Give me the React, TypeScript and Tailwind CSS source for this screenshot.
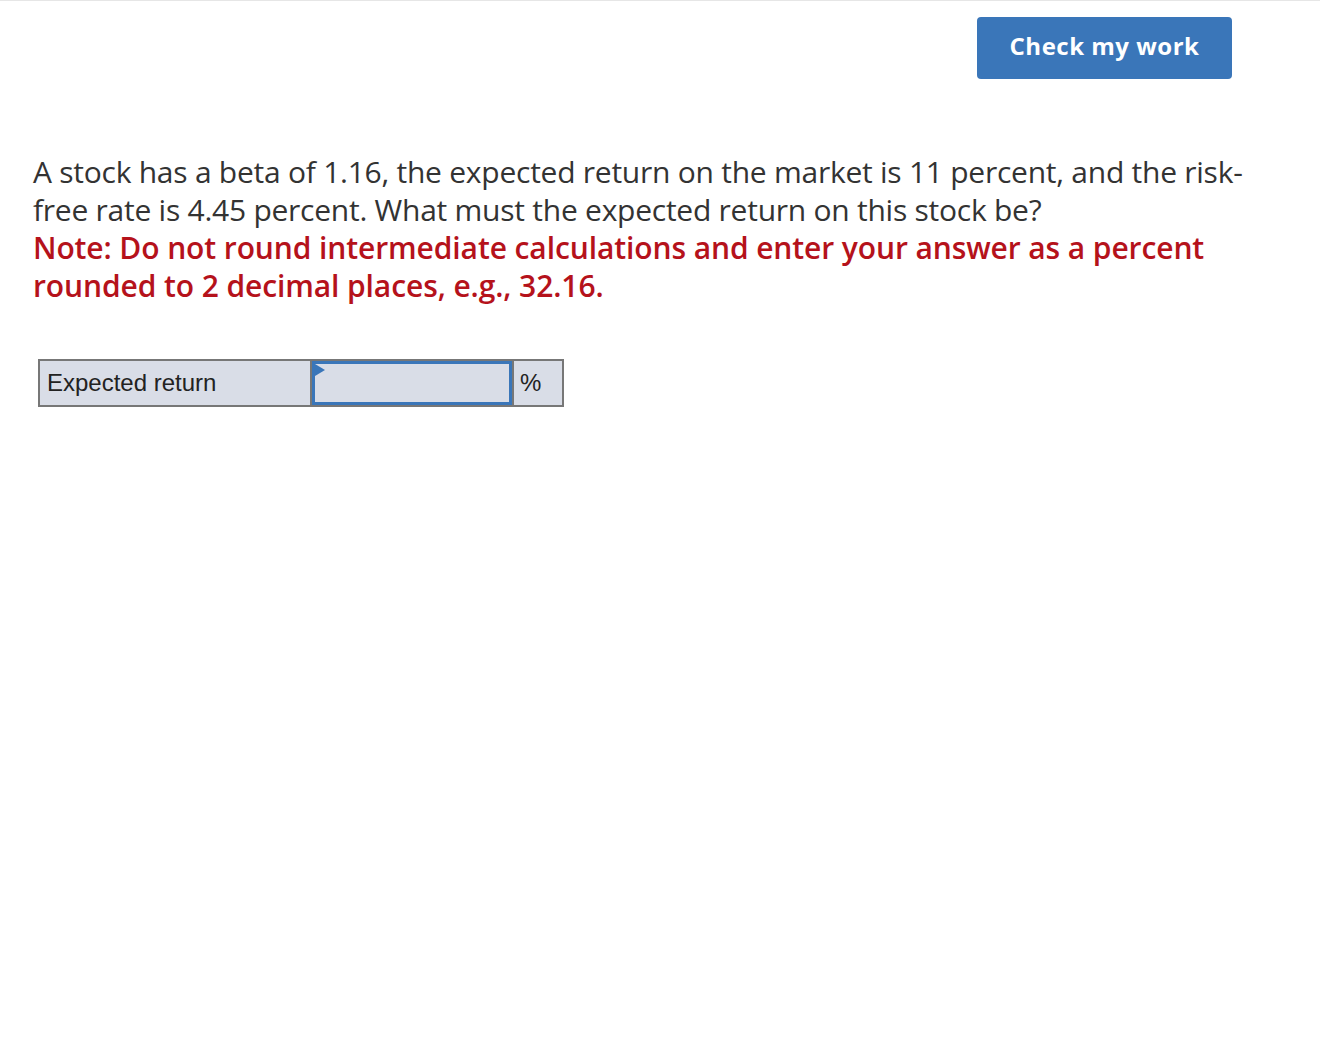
import React from 'react'

export default function App() {
  return (
    <div className="min-h-[1038px] w-[1320px] border-t border-[#e6e6e6] bg-white" style={{ fontFamily: '"Open Sans", Lato, sans-serif' }}>
      <div className="flex justify-end pr-[88px] pt-4">
        <button className="h-[62px] w-[255px] rounded-[4px] bg-[#3a76b9] pb-[5px] text-[24px] font-bold tracking-[0.5px] text-white">
          Check my work
        </button>
      </div>

      <div className="mt-[74px] pl-[33px] leading-[38px]">
        <p className="whitespace-nowrap text-[30px] tracking-[-0.25px] text-[#333]">
          A stock has a beta of 1.16, the expected return on the market is 11 percent, and the risk-
          <br />
          free rate is 4.45 percent. What must the expected return on this stock be?
        </p>
        <p className="whitespace-nowrap text-[30px] font-semibold tracking-[-0.1px] text-[#b5121b]">
          Note: Do not round intermediate calculations and enter your answer as a percent
          <br />
          rounded to 2 decimal places, e.g., 32.16.
        </p>
      </div>

      <div className="ml-[38px] mt-[54px] flex h-[48px] w-[526px] border-2 border-[#777] bg-[#d9dde7] text-[24px] text-[#222]" style={{ fontFamily: '"Liberation Sans", Arial, sans-serif' }}>
        <div className="flex w-[272px] items-center border-r-2 border-[#777] pl-[7px]">Expected return</div>
        <div className="relative w-[200px] border-[3px] border-[#3a76b9]">
          <div className="absolute left-0 top-0 h-0 w-0 border-b-[6px] border-l-[10px] border-t-[6px] border-b-transparent border-l-[#3a76b9] border-t-transparent" />
        </div>
        <div className="flex flex-1 items-center border-l-2 border-[#777] pl-[6px]">%</div>
      </div>
    </div>
  )
}
